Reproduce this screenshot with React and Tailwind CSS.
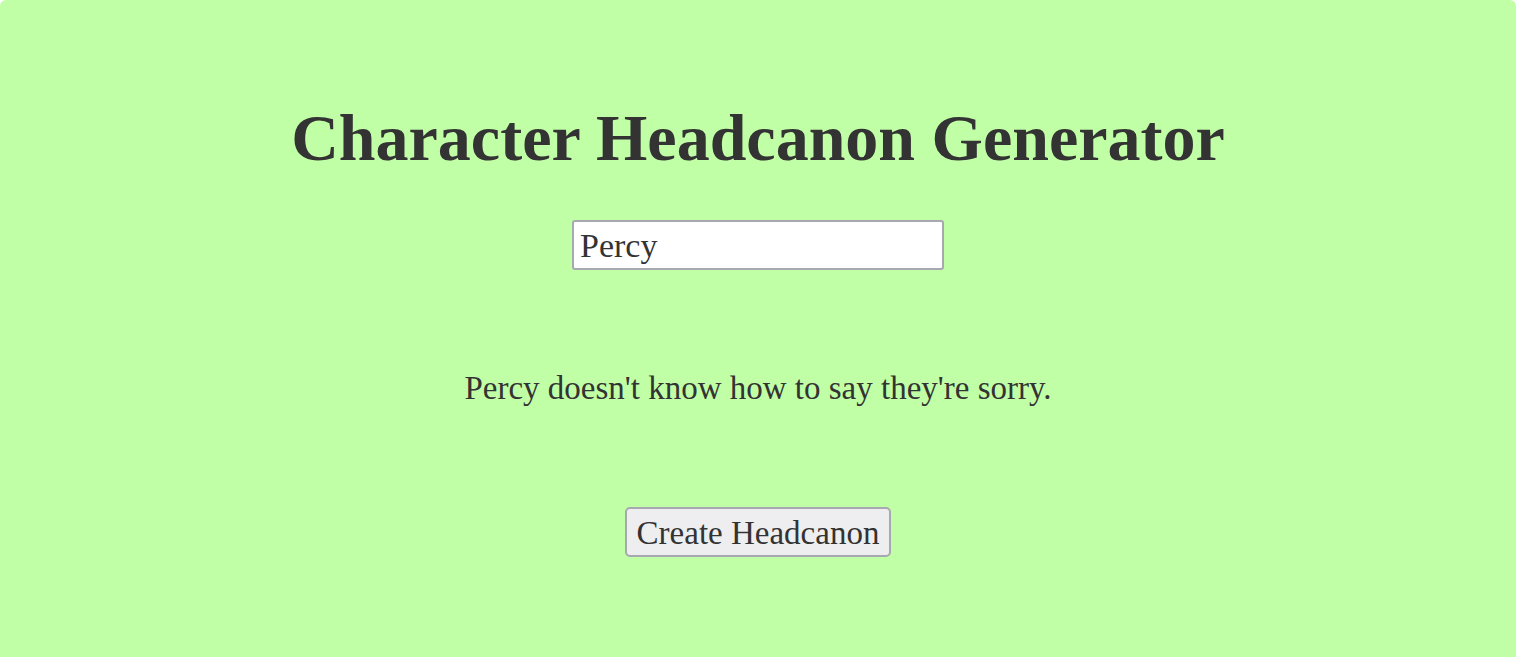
import { useState } from "react";

const templates = [
  "doesn't know how to say they're sorry.",
  "hums when they're nervous.",
  "secretly keeps every letter they've ever received.",
  "is terrible at keeping plants alive.",
];

export default function App() {
  const [name, setName] = useState("Percy");
  const [line, setLine] = useState(templates[0]);

  function makeHeadcanon() {
    const next = templates[Math.floor(Math.random() * templates.length)];
    setLine(next);
  }

  return (
    <div className="h-screen overflow-hidden bg-white font-['Liberation_Serif',serif] text-[#333333]">
      <div className="min-h-[700px] rounded-md bg-[#c1ffa6] flex flex-col items-center pt-[100px]">
        <h1 className="text-[66px] font-bold leading-[76px]">Character Headcanon Generator</h1>
        <input
          value={name}
          onChange={(e) => setName(e.target.value)}
          className="mt-[44px] w-[372px] h-[50px] px-[6px] rounded-[3px] border-2 border-[#a8a8b0] bg-white text-[34px] text-[#333333] outline-none"
        />
        <p className="mt-[99px] text-[33px] leading-[38px]">
          {name} {line}
        </p>
        <button
          onClick={makeHeadcanon}
          className="mt-[100px] h-[50px] px-[10px] rounded-[5px] border-2 border-[#a8a8b0] bg-[#eeeef0] text-[33px] text-[#333333]"
        >
          Create Headcanon
        </button>
      </div>
    </div>
  );
}
